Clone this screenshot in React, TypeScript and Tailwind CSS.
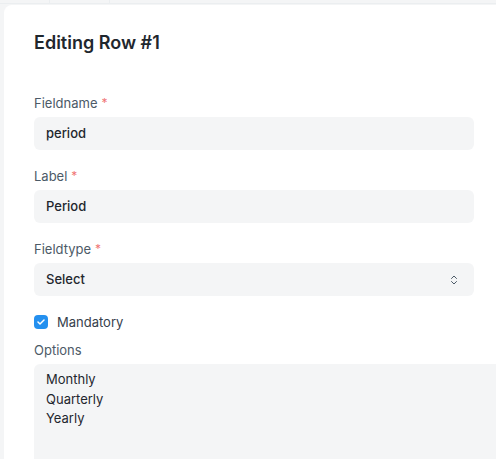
const Field = ({ label, value, required, select }: { label: string; value: string; required?: boolean; select?: boolean }) => (
  <div>
    <div className="mb-[6px] flex h-[16px] items-center text-[13px] leading-[16px] text-[#4c5a67]">
      {label}
      {required && <span className="ml-[4px] text-[12px] leading-none text-[#f07575]">*</span>}
    </div>
    <div className="flex h-[33px] items-center justify-between rounded-[6px] bg-[#f4f5f6] px-[12px] pt-[1px] text-[13px] font-medium text-[#1f272e]">
      <span>{value}</span>
      {select && (
        <svg width="8" height="12" viewBox="0 0 8 12" fill="none" className="mr-[4px]">
          <path d="M1.5 4.5L4 2L6.5 4.5" stroke="#4c5a67" strokeWidth="1" strokeLinecap="round" strokeLinejoin="round" />
          <path d="M1.5 7.5L4 10L6.5 7.5" stroke="#4c5a67" strokeWidth="1" strokeLinecap="round" strokeLinejoin="round" />
        </svg>
      )}
    </div>
  </div>
);

export default function App() {
  return (
    <div className="flex h-[459px] w-[496px] flex-col overflow-hidden bg-[#f4f5f6] font-['Inter',sans-serif]">
      {/* faint grid columns behind the dialog */}
      <div className="flex h-[4px] shrink-0 border-b border-[#ebeef0]">
        <div className="w-[50px] border-r border-[#ebeef0]" />
        <div className="w-[60px] border-r border-[#ebeef0]" />
      </div>

      <div className="ml-[4px] mt-[1px] flex-1 rounded-tl-[8px] bg-white pl-[30px] pt-[24px]">
        <h2 className="text-[18px] font-semibold leading-[28px] text-[#1f272e]">Editing Row #1</h2>

        <div className="mt-[38px] flex w-[440px] flex-col gap-[18px]">
          <Field label="Fieldname" value="period" required />
          <Field label="Label" value="Period" required />
          <Field label="Fieldtype" value="Select" required select />
        </div>

        <div className="mt-[18px] flex items-center gap-[9px]">
          <div className="flex h-[14px] w-[14px] items-center justify-center rounded-[4px] bg-[#2490ef]">
            <svg width="8" height="6" viewBox="0 0 8 6" fill="none">
              <path d="M1 3L3 5L7 1" stroke="white" strokeWidth="1.5" strokeLinecap="round" strokeLinejoin="round" />
            </svg>
          </div>
          <span className="text-[13px] leading-[16px] text-[#36414c]">Mandatory</span>
        </div>

        <div className="mt-[12px] mb-[6px] text-[13px] leading-[16px] text-[#4c5a67]">Options</div>
        <div className="h-[120px] w-[480px] rounded-tl-[6px] bg-[#f4f5f6] px-[12px] pt-[6px] text-[13px] leading-[19.5px] text-[#1f272e]">
          <div>Monthly</div>
          <div>Quarterly</div>
          <div>Yearly</div>
        </div>
      </div>
    </div>
  );
}
